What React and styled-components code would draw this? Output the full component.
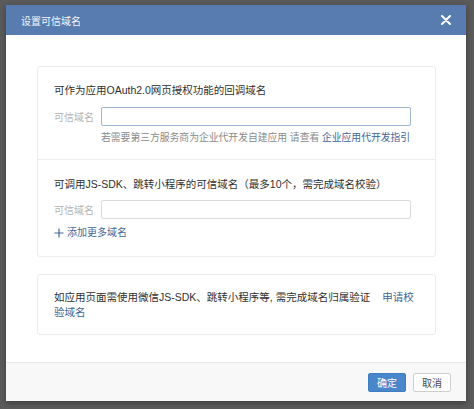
import React from "react";
import styled, { createGlobalStyle } from "styled-components";

const GlobalStyle = createGlobalStyle`
  html, body {
    margin: 0;
    padding: 0;
    height: 100%;
  }
  body {
    font-family: "Liberation Sans", "Noto Sans CJK SC", sans-serif;
    background: #5b5b5b;
  }
  #root {
    height: 100%;
  }
`;

const Backdrop = styled.div`
  box-sizing: border-box;
  height: 409px;
  padding: 5px 8px 8px 6px;
  background: #5b5b5b;
`;

const Modal = styled.div`
  width: 460px;
  height: 396px;
  display: flex;
  flex-direction: column;
  background: #fff;
  box-shadow: 0 2px 6px rgba(0, 0, 0, 0.35);
`;

const Header = styled.div`
  height: 30px;
  flex: none;
  display: flex;
  align-items: center;
  justify-content: space-between;
  padding: 0 15px;
  background: #587cb0;
`;

const Title = styled.span`
  color: #f4f7fb;
  font-size: 10px;
`;

const Close = styled.button`
  border: 0;
  padding: 0;
  background: none;
  width: 10px;
  height: 10px;
  display: flex;
  cursor: pointer;
`;

const Body = styled.div`
  flex: 1;
  display: flex;
  flex-direction: column;
  gap: 17px;
  padding: 31px 30px 0 31px;
`;

const Card = styled.div`
  border: 1px solid #ececec;
  border-radius: 3px;
  display: flex;
  flex-direction: column;
`;

const Section = styled.div`
  padding: ${({ $top }) => $top}px 24px ${({ $bottom }) => $bottom}px 16px;
  display: flex;
  flex-direction: column;
  & + & {
    border-top: 1px solid #ececec;
  }
`;

const SectionTitle = styled.div`
  font-size: 10.5px;
  line-height: 12px;
  color: #2f2f2f;
`;

const Row = styled.div`
  display: flex;
  align-items: center;
  margin-top: ${({ $gap }) => $gap}px;
`;

const Label = styled.span`
  width: 47px;
  flex: none;
  font-size: 10px;
  color: #b3b3b3;
`;

const Input = styled.input`
  box-sizing: border-box;
  flex: 1;
  height: 19px;
  border: 1px solid ${({ $focus }) => ($focus ? "#9fb6d6" : "#dcdcdc")};
  border-radius: 2px;
  padding: 0 6px;
  font-family: inherit;
  font-size: 10px;
  outline: none;
  background: #fff;
`;

const Hint = styled.div`
  margin: 6px 0 0 47px;
  font-size: 9.8px;
  line-height: 12px;
  color: #8a8a8a;
  white-space: nowrap;
`;

const Link = styled.a`
  color: #3f6499;
  text-decoration: none;
  cursor: pointer;
  margin-left: ${({ $gap }) => $gap || 0}px;
`;

const AddMore = styled.div`
  margin-top: 8px;
  display: flex;
  align-items: center;
  gap: 3px;
  font-size: 10px;
  line-height: 12px;
  color: #46679a;
  cursor: pointer;
`;

const Notice = styled.div`
  padding: 15px 16px 14px 16px;
  font-size: 10.5px;
  line-height: 15px;
  color: #2f2f2f;
`;

const Footer = styled.div`
  height: 38px;
  flex: none;
  display: flex;
  align-items: center;
  justify-content: flex-end;
  gap: 7px;
  padding: 0 15px;
  background: #f8f8f8;
  border-top: 1px solid #e6e6e6;
`;

const Button = styled.button`
  box-sizing: border-box;
  width: 38px;
  height: 19px;
  padding: 0;
  border-radius: 2px;
  font-family: inherit;
  font-size: 10px;
  cursor: pointer;
  border: 1px solid ${({ $primary }) => ($primary ? "#3f7dc2" : "#cfcfcf")};
  background: ${({ $primary }) => ($primary ? "#4a87ca" : "#fff")};
  color: ${({ $primary }) => ($primary ? "#fff" : "#4a4a4a")};
`;

export default function App() {
  return (
    <>
      <GlobalStyle />
      <Backdrop>
        <Modal>
          <Header>
            <Title>设置可信域名</Title>
            <Close aria-label="关闭">
              <svg width="10" height="10" viewBox="0 0 10 10">
                <path d="M1 1L9 9M9 1L1 9" stroke="#fff" strokeWidth="2" strokeLinecap="round" />
              </svg>
            </Close>
          </Header>
          <Body>
            <Card>
              <Section $top={17} $bottom={15}>
                <SectionTitle>可作为应用OAuth2.0网页授权功能的回调域名</SectionTitle>
                <Row $gap={11}>
                  <Label>可信域名</Label>
                  <Input $focus />
                </Row>
                <Hint>
                  若需要第三方服务商为企业代开发自建应用 请查看 <Link>企业应用代开发指引</Link>
                </Hint>
              </Section>
              <Section $top={18} $bottom={17}>
                <SectionTitle>可调用JS-SDK、跳转小程序的可信域名（最多10个，需完成域名校验）</SectionTitle>
                <Row $gap={10}>
                  <Label>可信域名</Label>
                  <Input />
                </Row>
                <AddMore>
                  <svg width="10" height="10" viewBox="0 0 10 10">
                    <path d="M5 0.5V9.5M0.5 5H9.5" stroke="#46679a" strokeWidth="1.2" />
                  </svg>
                  添加更多域名
                </AddMore>
              </Section>
            </Card>
            <Card>
              <Notice>
                如应用页面需使用微信JS-SDK、跳转小程序等, 需完成域名归属验证
                <Link $gap={12}>申请校验域名</Link>
              </Notice>
            </Card>
          </Body>
          <Footer>
            <Button $primary>确定</Button>
            <Button>取消</Button>
          </Footer>
        </Modal>
      </Backdrop>
    </>
  );
}
